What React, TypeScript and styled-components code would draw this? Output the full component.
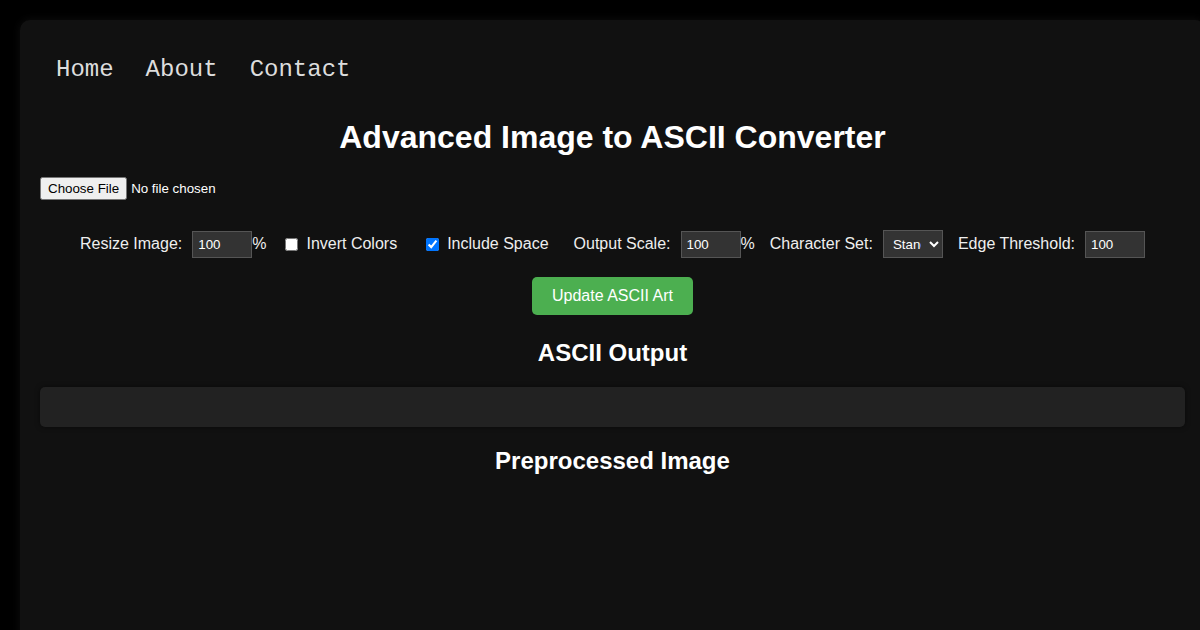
import React from "react";
import styled, { createGlobalStyle } from "styled-components";

const GlobalStyle = createGlobalStyle`
  html, body {
    margin: 0;
    padding: 0;
    background: #000;
    overflow: hidden;
  }
  body {
    font-family: "Liberation Sans", Arial, sans-serif;
    color: #fff;
  }
`;

const Container = styled.div`
  width: 1145px;
  min-height: 700px;
  margin: 20px;
  padding: 20px;
  background: #111;
  border-radius: 10px;
  box-shadow: 0 0 10px rgba(255, 255, 255, 0.06);
`;

const Nav = styled.nav`
  display: flex;
  gap: 32px;
  padding: 16px 16px 12px;
`;

const NavLink = styled.a`
  font-family: "Courier New", Courier, "Nimbus Mono PS", "FreeMono", "Liberation Mono", monospace;
  font-size: 24px;
  color: #ddd;
  text-decoration: none;
`;

const Title = styled.h1`
  font-size: 32px;
  font-weight: bold;
  text-align: center;
  margin: 24px 0 21px;
  color: #fff;
`;

const FileInput = styled.input`
  display: block;
  font-family: "Liberation Sans", Arial, sans-serif;
  font-size: 13.33px;
  color: #fff;

  &::file-selector-button {
    padding: 2px 6px;
  }
`;

const Controls = styled.div`
  display: flex;
  justify-content: center;
  align-items: center;
  gap: 15px;
  margin-top: 30px;
  font-size: 16px;
  color: #eee;
`;

const Group = styled.label`
  display: flex;
  align-items: center;
`;

const CheckGroup = styled.label`
  display: flex;
  align-items: center;
  margin-right: 10px;
`;

const Checkbox = styled.input`
  width: 13px;
  height: 13px;
  margin: 0 8px 0 4px;
`;

const NumInput = styled.input`
  box-sizing: border-box;
  width: 60px;
  height: 27px;
  margin-left: 10px;
  padding: 5px;
  background: #333;
  border: 1px solid #555;
  color: #fff;
  font-family: "Liberation Sans", Arial, sans-serif;
  font-size: 13.33px;
`;

const Select = styled.select`
  box-sizing: border-box;
  width: 60px;
  height: 28px;
  margin-left: 10px;
  padding: 5px;
  background: #333;
  border: 1px solid #555;
  color: #fff;
  font-family: "Liberation Sans", Arial, sans-serif;
  font-size: 13.33px;
`;

const ButtonRow = styled.div`
  display: flex;
  justify-content: center;
  margin-top: 19px;
`;

const Button = styled.button`
  background: #4caf50;
  color: #fff;
  border: none;
  border-radius: 5px;
  padding: 10px 20px;
  height: 38px;
  font-family: "Liberation Sans", Arial, sans-serif;
  font-size: 16px;
`;

const SubTitle = styled.h2`
  font-size: 24px;
  font-weight: bold;
  text-align: center;
  margin: ${(p: { $top?: number }) => p.$top ?? 20}px 0 20px;
  color: #fff;
`;

const Output = styled.pre`
  margin: 0;
  height: 40px;
  background: #222;
  border-radius: 5px;
  box-shadow: 0 0 5px rgba(0, 0, 0, 0.5);
`;

export default function App() {
  return (
    <>
      <GlobalStyle />
      <Container>
        <Nav>
          <NavLink href="#">Home</NavLink>
          <NavLink href="#">About</NavLink>
          <NavLink href="#">Contact</NavLink>
        </Nav>
        <Title>Advanced Image to ASCII Converter</Title>
        <FileInput type="file" />
        <Controls>
          <Group>
            Resize Image:
            <NumInput type="number" defaultValue={100} />%
          </Group>
          <CheckGroup>
            <Checkbox type="checkbox" />
            Invert Colors
          </CheckGroup>
          <CheckGroup>
            <Checkbox type="checkbox" defaultChecked />
            Include Space
          </CheckGroup>
          <Group>
            Output Scale:
            <NumInput type="number" defaultValue={100} />%
          </Group>
          <Group>
            Character Set:
            <Select defaultValue="standard">
              <option value="standard">Standard</option>
              <option value="detailed">Detailed</option>
              <option value="blocks">Blocks</option>
            </Select>
          </Group>
          <Group>
            Edge Threshold:
            <NumInput type="number" defaultValue={100} />
          </Group>
        </Controls>
        <ButtonRow>
          <Button>Update ASCII Art</Button>
        </ButtonRow>
        <SubTitle $top={24}>ASCII Output</SubTitle>
        <Output />
        <SubTitle>Preprocessed Image</SubTitle>
      </Container>
    </>
  );
}
